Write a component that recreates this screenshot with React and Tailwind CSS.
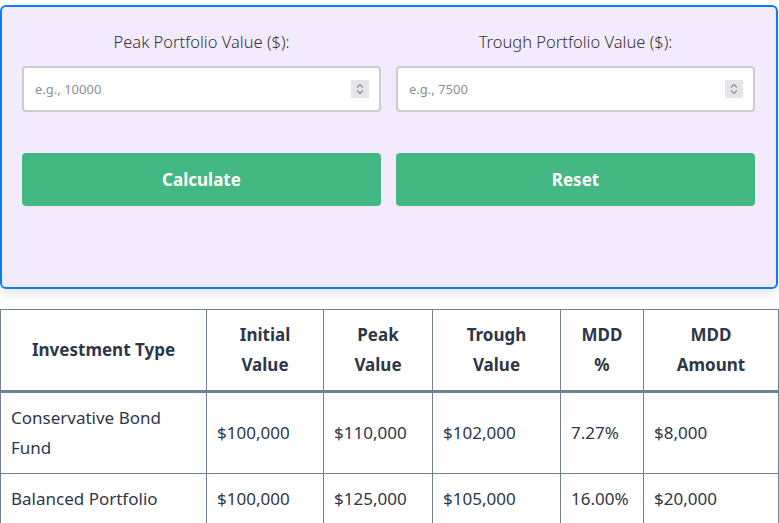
import React from "react";

function Spinner() {
  return (
    <div className="absolute right-[12px] top-1/2 -translate-y-1/2 w-[18px] h-[18px] bg-[#e6e6ea] flex items-center justify-center">
      <svg width="10" height="14" viewBox="0 0 10 14" fill="none" stroke="#8a8a90" strokeWidth="1.2">
        <path d="M2 5.5 L5 2.5 L8 5.5" />
        <path d="M2 8.5 L5 11.5 L8 8.5" />
      </svg>
    </div>
  );
}

function Field({ label, placeholder }) {
  return (
    <div className="flex flex-col">
      <label className="text-center text-[16.5px] leading-[24px] font-light text-[#333] mb-[12px]">{label}</label>
      <div className="relative">
        <input
          type="text"
          placeholder={placeholder}
          className="w-full h-[46px] border-2 border-[#cccccc] rounded-[4px] bg-white pl-[11px] text-[13px] text-[#333] placeholder:text-[#8a8f99] outline-none"
        />
        <Spinner />
      </div>
    </div>
  );
}

const headers = [
  ["Investment Type"],
  ["Initial", "Value"],
  ["Peak", "Value"],
  ["Trough", "Value"],
  ["MDD", "%"],
  ["MDD", "Amount"],
];

const rows = [
  ["Conservative Bond Fund", "$100,000", "$110,000", "$102,000", "7.27%", "$8,000"],
  ["Balanced Portfolio", "$100,000", "$125,000", "$105,000", "16.00%", "$20,000"],
];

export default function App() {
  return (
    <div className="w-[778px] bg-white text-[#2d3748]" style={{ fontFamily: '"Noto Sans", "Open Sans", sans-serif' }}>
      <div className="mt-[5px] border-2 border-[#0a7cff] rounded-[6px] bg-[#f3ebfd] pt-[23px] pl-[20px] pr-[21px] h-[284px] shadow-[0_6px_10px_rgba(0,0,0,0.08)]">
        <div className="grid grid-cols-2 gap-x-[15px]">
          <Field label="Peak Portfolio Value ($):" placeholder="e.g., 10000" />
          <Field label="Trough Portfolio Value ($):" placeholder="e.g., 7500" />
        </div>
        <div className="grid grid-cols-2 gap-x-[15px] mt-[41px]">
          <button className="h-[53px] rounded-[4px] bg-[#43b883] text-white font-bold text-[17px]">Calculate</button>
          <button className="h-[53px] rounded-[4px] bg-[#43b883] text-white font-bold text-[17px]">Reset</button>
        </div>
      </div>
      <table className="mt-[20px] w-[778px] table-fixed border-collapse bg-white text-[17px] leading-[30px]">
        <colgroup>
          <col className="w-[206px]" />
          <col className="w-[117px]" />
          <col className="w-[109px]" />
          <col className="w-[128px]" />
          <col className="w-[83px]" />
          <col className="w-[135px]" />
        </colgroup>
        <thead>
          <tr>
            {headers.map((h, i) => (
              <th key={i} className="border border-[#718096] border-b-[3px] px-[10px] py-[10px] font-bold text-center text-[#2d3748]">
                {h.map((part, k) => (
                  <React.Fragment key={k}>
                    {k > 0 && <br />}
                    {part}
                  </React.Fragment>
                ))}
              </th>
            ))}
          </tr>
        </thead>
        <tbody>
          {rows.map((r, i) => (
            <tr key={i}>
              {r.map((c, j) => (
                <td key={j} className="border border-[#718096] px-[10px] py-[10px] text-left text-[#2d3748]">
                  {c}
                </td>
              ))}
            </tr>
          ))}
        </tbody>
      </table>
    </div>
  );
}
